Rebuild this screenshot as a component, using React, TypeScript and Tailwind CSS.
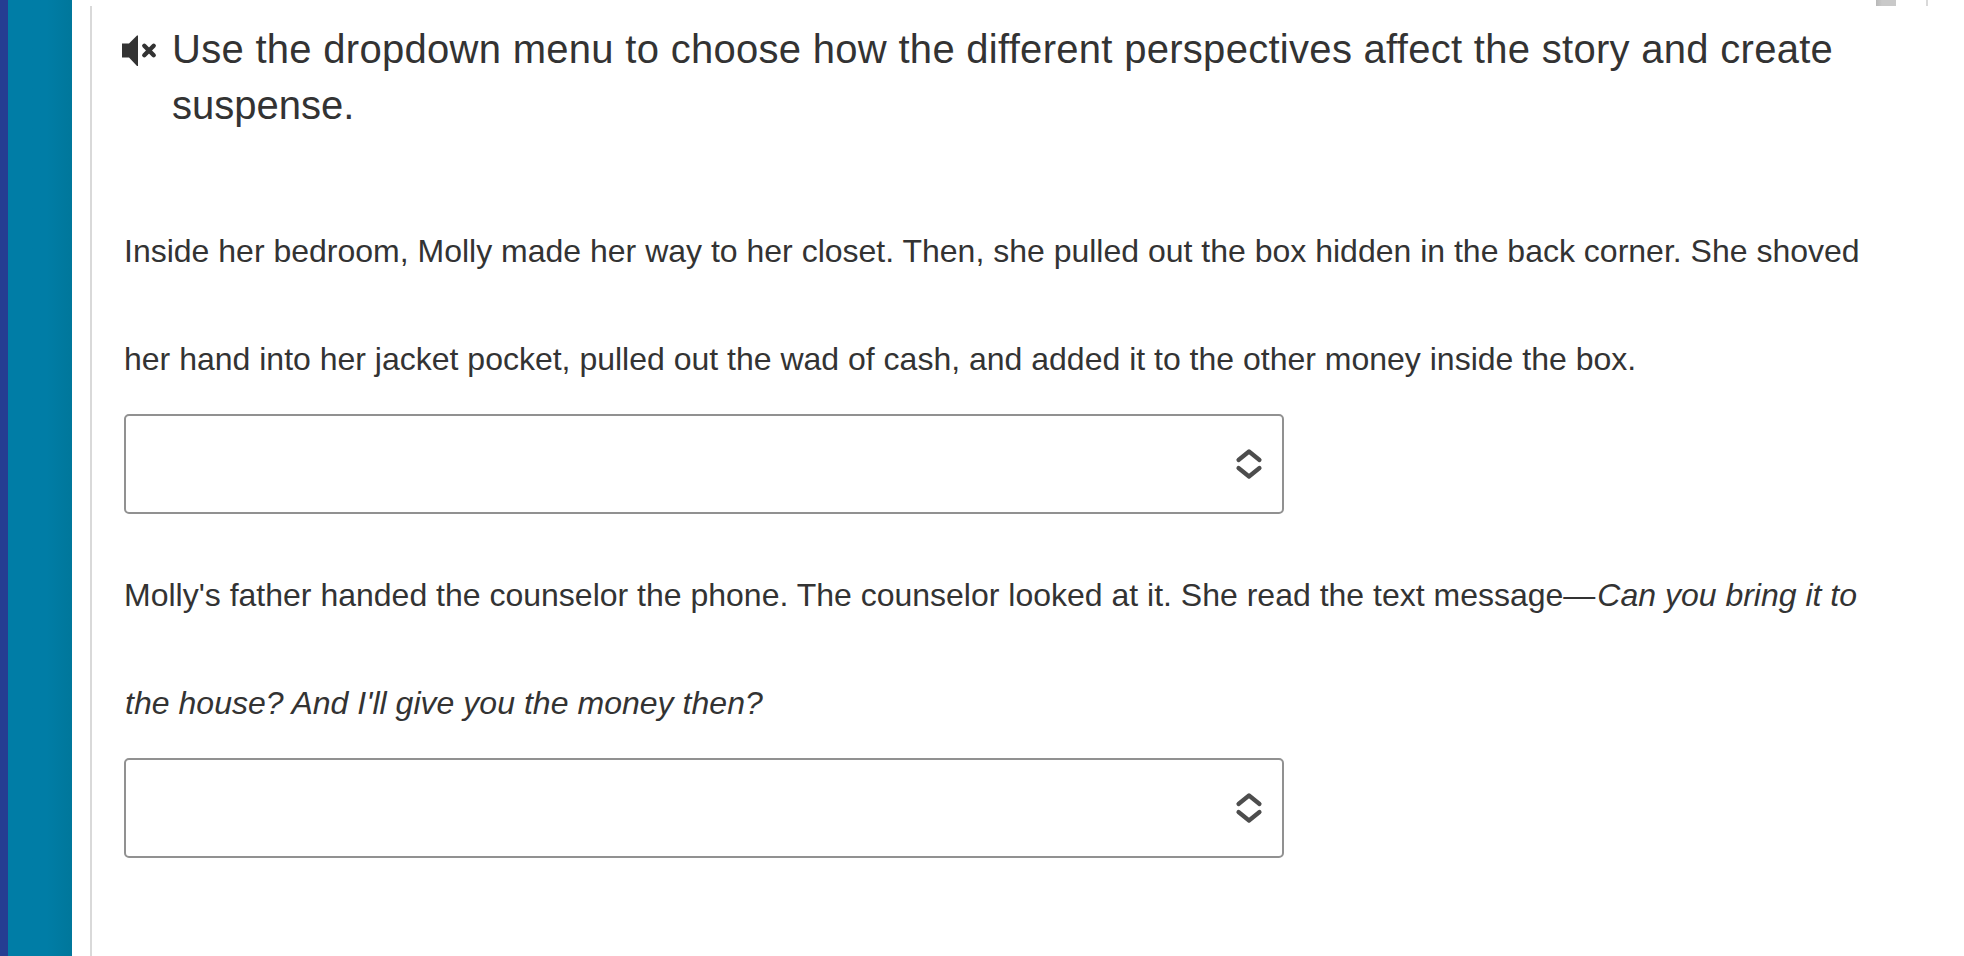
function SelectField() {
	return (
		<button
			type="button"
			aria-label="Select an answer"
			className="mt-px flex h-[100px] w-[1160px] items-center justify-end rounded-[5px] border-2 border-[#919191] bg-white pr-[19px]"
		>
			<svg
				width="28"
				height="32"
				viewBox="0 0 28 32"
				fill="none"
				stroke="#4d4d4d"
				strokeWidth="4.2"
				strokeLinecap="round"
				strokeLinejoin="round"
			>
				<path d="M3.5 12L14 3.5L24.5 12M3.5 20L14 28.5L24.5 20" />
			</svg>
		</button>
	)
}

function MutedIcon() {
	return (
		<svg className="mt-[14px] -ml-[2px] shrink-0" width="50" height="32" viewBox="0 0 50 32">
			<path d="M0 8.5H7L15 0.5H16V31H15L7 22.5H0Z" fill="#333333" />
			<path
				d="M22.3 10.8L31.7 20.2M31.7 10.8L22.3 20.2"
				stroke="#333333"
				strokeWidth="4.4"
				strokeLinecap="round"
			/>
		</svg>
	)
}

export default function App() {
	return (
		<div className="flex h-[956px] w-[1964px] overflow-hidden bg-white font-['Liberation_Sans',Arial,sans-serif] text-[#333333]">
			<div className="w-[8px] shrink-0 bg-[#253e92]" />
			<div className="w-[64px] shrink-0 bg-linear-to-r from-[#007da6] from-60% to-[#00779b]" />
			<div className="mt-[6px] ml-[18px] w-[2px] shrink-0 bg-[#d9d9d9]" />

			<main className="ml-[32px] w-[1752px] shrink-0">
				<div className="flex pt-[21px]">
					<MutedIcon />
					<h1 className="text-[40px] leading-[56px] whitespace-nowrap">
						<span className="tracking-[0.29px]">
							Use the dropdown menu to choose how the different perspectives affect the story and create
						</span>
						<br />
						suspense.
					</h1>
				</div>
				<p className="mt-[64px] text-[32px] leading-[108px] whitespace-nowrap">
					Inside her bedroom, Molly made her way to her closet. Then, she pulled out the box hidden in the back corner. She shoved
					<br />
					her hand into her jacket pocket, pulled out the wad of cash, and added it to the other money inside the box.
				</p>
				<SelectField />
				<p className="mt-[27px] text-[32px] leading-[108px] whitespace-nowrap">
					Molly's father handed the counselor the phone. The counselor looked at it. She read the text message—
					<i className="ml-[2px]">Can you bring it to</i>
					<br />
					<i className="ml-px tracking-[0.03px]">the house? And I'll give you the money then?</i>
				</p>
				<SelectField />
			</main>

			{/* Bottom edge of the panel above */}
			<div className="h-[6px] w-[20px] shrink-0 bg-linear-to-r from-[#b8b8b8] to-[#c9c9c9] to-30%" />
			<div className="ml-[30px] h-[6px] w-[2px] shrink-0 bg-[#d9d9d9]" />
		</div>
	)
}
